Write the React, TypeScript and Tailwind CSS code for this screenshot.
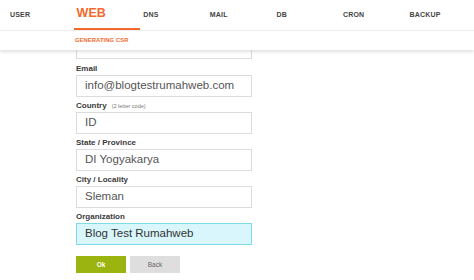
import React from "react";

const tabs = ["USER", "WEB", "DNS", "MAIL", "DB", "CRON", "BACKUP"];

function Field({ label, sub, value, active }: { label: string; sub?: string; value: string; active?: boolean }) {
  return (
    <div className="flex flex-col">
      <div className="h-[15px] flex items-end pb-[1px] text-[8px] font-semibold text-[#3a3a3a] leading-[10px]">
        {label}
        {sub && <span className="ml-[5px] text-[5.5px] font-normal text-[#777]">{sub}</span>}
      </div>
      <div
        className={
          "w-[176px] h-[22px] border flex items-center pl-[8px] text-[11.5px] " +
          (active ? "bg-[#d8f6fb] border-[#7fdbe8] text-[#333]" : "bg-white border-[#dcdcdc] text-[#555]")
        }
      >
        {value}
      </div>
    </div>
  );
}

export default function App() {
  return (
    <div className="w-[474px] h-[280px] bg-white overflow-hidden relative" style={{ fontFamily: '"Liberation Sans", Arial, sans-serif' }}>
      <div className="relative z-10 bg-white shadow-[0_2px_3px_rgba(0,0,0,0.12)]">
        <div className="flex pl-[7px] h-[31px] border-b border-[#ececec]">
          {tabs.map((t) => (
            <div
              key={t}
              className={
                "w-[66.6px] pl-[3px] flex items-center " +
                (t === "WEB"
                  ? "border-b-2 border-[#f26a2e] text-[#f26a2e] text-[12.5px] font-bold pb-[2px]"
                  : "text-[7px] font-bold text-[#444] tracking-[0.2px]")
              }
            >
              {t}
            </div>
          ))}
        </div>
        <div className="h-[19px] flex items-center pl-[75px] text-[5.8px] font-semibold text-[#f26a2e] tracking-[0.1px]">
          GENERATING CSR
        </div>
      </div>
      <div className="pl-[76px] flex flex-col">
        <div className="w-[176px] h-[9px] border-x border-b border-[#dcdcdc]" />
        <div className="h-[1px]" />
        <Field label="Email" value="info@blogtestrumahweb.com" />
        <Field label="Country" sub="(2 letter code)" value="ID" />
        <Field label="State / Province" value="DI Yogyakarya" />
        <Field label="City / Locality" value="Sleman" />
        <Field label="Organization" value="Blog Test Rumahweb" active />
        <div className="flex gap-[4px] mt-[11px]">
          <div className="w-[50px] h-[17px] bg-[#9bb40f] flex items-center justify-center text-[6.5px] font-semibold text-white">Ok</div>
          <div className="w-[50px] h-[17px] bg-[#dedede] flex items-center justify-center text-[6.5px] text-[#666]">Back</div>
        </div>
      </div>
    </div>
  );
}
